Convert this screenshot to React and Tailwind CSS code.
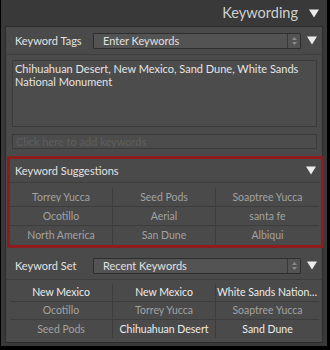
import React from "react";

const F = { fontFamily: '"Lato", "Open Sans", sans-serif' };

function Tri({ className = "" }) {
  return (
    <svg width="10" height="9" viewBox="0 0 10 9" className={className}>
      <polygon points="0,0.5 10,0.5 5,8.5" fill="#ececec" />
    </svg>
  );
}

function Stepper() {
  return (
    <div className="h-full w-[13px] border-l border-[#383838] flex items-center justify-center">
      <svg width="7" height="10" viewBox="0 0 7 10">
        <polygon points="1,4 6,4 3.5,1" fill="#8a8a8a" />
        <polygon points="1,6 6,6 3.5,9" fill="#8a8a8a" />
      </svg>
    </div>
  );
}

function Dropdown({ label }) {
  return (
    <div className="flex-1 h-[16px] flex items-center bg-[#535353] border border-[#2e2e2e] rounded-[1px]">
      <span className="flex-1 pl-[9px] text-[11px] text-[#e0e0e0] leading-none">{label}</span>
      <Stepper />
    </div>
  );
}

function Grid({ rows, h }) {
  return (
    <div>
      {rows.map((row, i) => (
        <div
          key={i}
          className={`grid grid-cols-3 ${h} ${i < rows.length - 1 ? "border-b border-[#3d3d3d]" : ""}`}
        >
          {row.map((c, j) => (
            <div
              key={j}
              className={`min-w-0 flex items-center ${j < 2 ? "border-r border-[#3d3d3d]" : ""}`}
            >
              <div
                className={`w-full truncate text-center px-[1px] text-[10.5px] leading-none ${
                  c.b ? "text-[#ececec]" : "text-[#a2a2a2]"
                }`}
              >
                {c.t}
              </div>
            </div>
          ))}
        </div>
      ))}
    </div>
  );
}

export default function App() {
  const sugg = [
    [{ t: "Torrey Yucca" }, { t: "Seed Pods" }, { t: "Soaptree Yucca" }],
    [{ t: "Ocotillo" }, { t: "Aerial" }, { t: "santa fe" }],
    [{ t: "North America" }, { t: "San Dune" }, { t: "Albiqui" }],
  ];
  const set = [
    [{ t: "New Mexico", b: 1 }, { t: "New Mexico", b: 1 }, { t: "White Sands National Monument", b: 1 }],
    [{ t: "Ocotillo" }, { t: "Torrey Yucca" }, { t: "Soaptree Yucca" }],
    [{ t: "Seed Pods" }, { t: "Chihuahuan Desert", b: 1 }, { t: "Sand Dune", b: 1 }],
  ];
  return (
    <div
      style={F}
      className="w-[330px] h-[350px] bg-[#393939] border-l border-l-black border-r-[3px] border-r-black border-b-[4px] border-b-black flex flex-col overflow-hidden"
    >
      <div className="h-[26px] flex items-center justify-end pr-[8px] gap-[11px] shrink-0">
        <span className="text-[14.5px] text-[#d0d0d0] leading-none">Keywording</span>
        <Tri />
      </div>
      <div className="ml-[4px] mr-[4px] flex-1 mb-[3px] bg-[#4a4a4a] border border-[#2c2c2c] flex flex-col">
        {/* Keyword Tags */}
        <div className="h-[28px] shrink-0 flex items-center pl-[9px] pr-[5px] border-b border-[#3e3e3e]">
          <span className="w-[78px] text-[11px] text-[#e2e2e2] leading-none">Keyword Tags</span>
          <Dropdown label="Enter Keywords" />
          <Tri className="ml-[6px]" />
        </div>
        <div className="pl-[6px] pr-[5px] pt-[5px] shrink-0">
          <div className="h-[67px] bg-[#4c4c4c] border border-[#3a3a3a] px-[2px] pt-[1px] text-[11px] leading-[13px] text-[#e4e4e4]">
            Chihuahuan Desert, New Mexico, Sand Dune, White Sands National Monument
          </div>
          <div className="mt-[7px] h-[15px] bg-[#4c4c4c] border border-[#3a3a3a] px-[3px] flex items-center text-[11px] leading-none text-[#5f5f5f]">
            Click here to add keywords
          </div>
        </div>
        {/* Suggestions */}
        <div className="mt-[7px] ml-[1px] mr-[-2px] h-[92px] shrink-0 border-[3px] border-[#8e1c1c] flex flex-col">
          <div className="h-[24px] shrink-0 flex items-center pl-[5px] pr-[5px] border-b border-[#3e3e3e]">
            <span className="flex-1 text-[11px] text-[#e2e2e2] leading-none">Keyword Suggestions</span>
            <Tri />
          </div>
          <div className="pt-[5px] pr-[2px]">
            <Grid rows={sugg} h="h-[19px]" />
          </div>
        </div>
        {/* Keyword Set */}
        <div className="h-[28px] mt-[4px] shrink-0 flex items-center pl-[9px] pr-[5px] border-b border-[#3e3e3e]">
          <span className="w-[78px] text-[11px] text-[#e2e2e2] leading-none">Keyword Set</span>
          <Dropdown label="Recent Keywords" />
          <Tri className="ml-[6px]" />
        </div>
        <div className="pt-[4px] pl-[4px] pr-[3px]">
          <Grid rows={set} h="h-[18px]" />
        </div>
      </div>
    </div>
  );
}
